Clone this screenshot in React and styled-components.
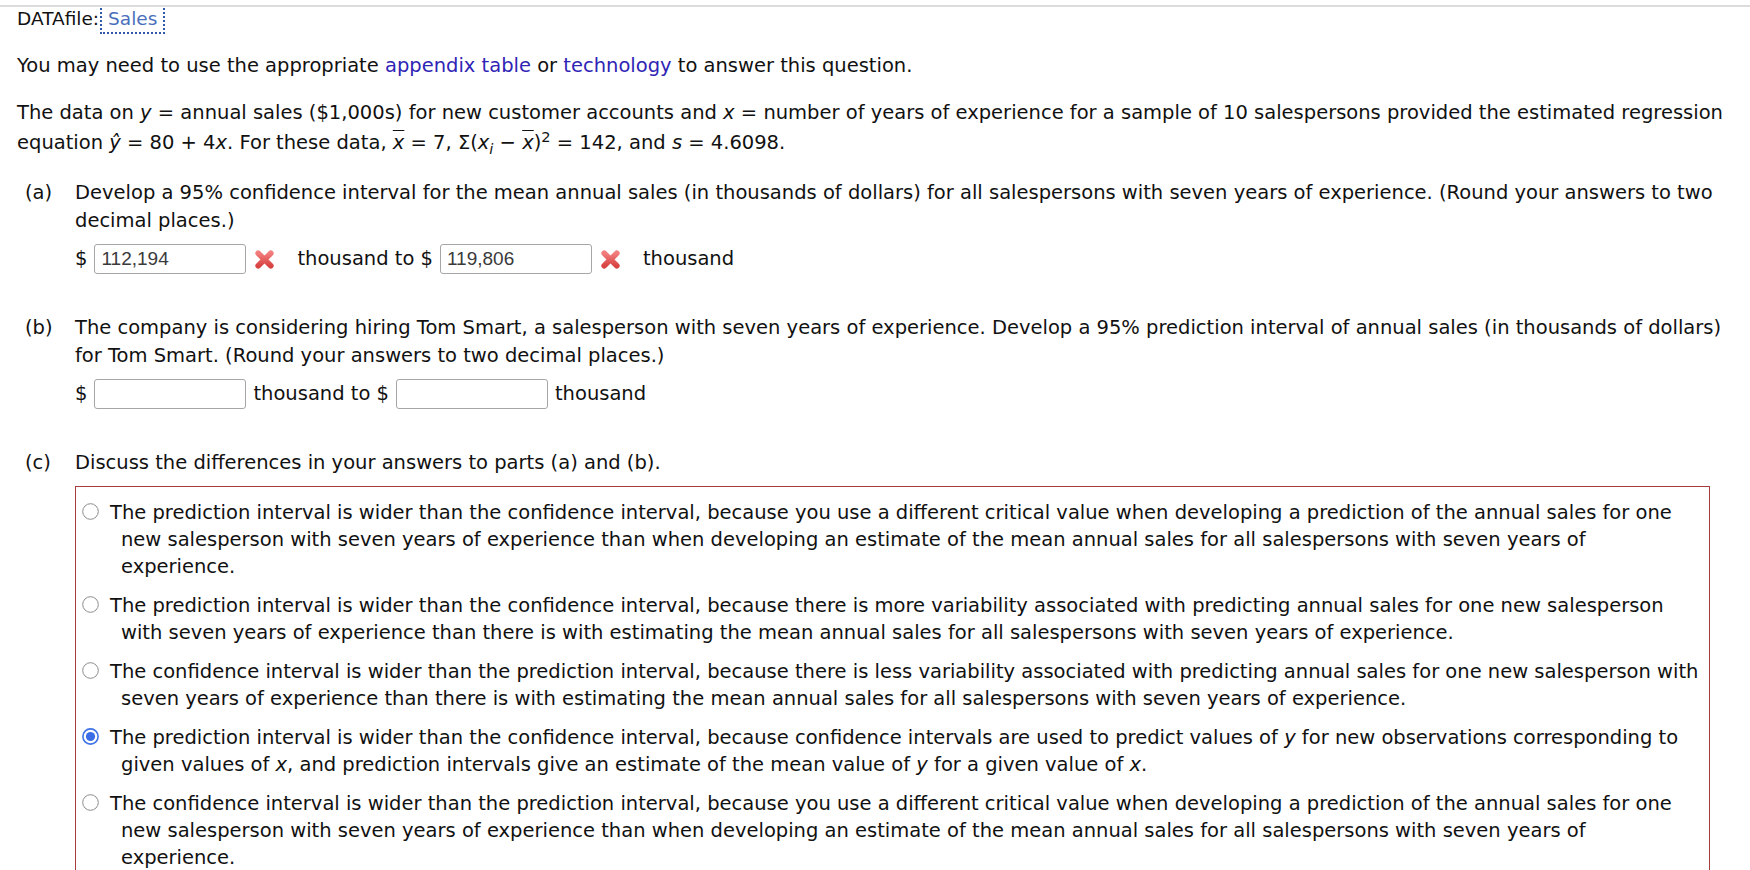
import React from 'react';
import styled, { createGlobalStyle } from 'styled-components';

const GlobalStyle = createGlobalStyle`
  html, body {
    margin: 0;
    padding: 0;
    background: #fff;
  }
  body {
    font-family: 'DejaVu Sans', Verdana, sans-serif;
    font-size: 19.5px;
    color: #111;
  }
`;

const Page = styled.div`
  margin-top: 5px;
  border-top: 2px solid #dcdcdc;
  padding: 1px 17px 0 17px;
`;

const DataLine = styled.div`
  font-size: 18.5px;
  line-height: 22px;
`;

const DataLink = styled.span`
  color: #4a70bb;
  margin-left: 1px;
  padding: 0 6px 3px 6px;
  border: 2px dotted #3158a8;
  border-top: none;
`;

const Intro = styled.p`
  margin: 22px 0 0 0;
  line-height: 27px;
`;

const Link = styled.span`
  color: #2f24b5;
`;

const Problem = styled.p`
  margin: 19px 0 0 0;
  line-height: 30px;
`;

const Var = styled.i`
  font-style: italic;
`;

const Bar = styled.i`
  font-style: italic;
  text-decoration: overline;
`;

const Sup = styled.sup`
  font-size: 0.75em;
  line-height: 0;
`;

const Sub = styled.sub`
  font-size: 0.75em;
  line-height: 0;
  font-style: italic;
`;

const Part = styled.div`
  display: flex;
  padding-left: 8px;
  margin-top: ${(p) => p.$top}px;
  line-height: 27.5px;
`;

const Label = styled.div`
  width: 50px;
  flex: none;
`;

const Body = styled.div`
  flex: 1;
`;

const AnswerRow = styled.div`
  display: flex;
  align-items: center;
  gap: 7px;
  margin-top: 10px;
  height: 30px;
`;

const Field = styled.div`
  box-sizing: border-box;
  width: 152px;
  height: 30px;
  border: 1px solid #a6a6a6;
  border-radius: 3px;
  padding: 0 6px;
  font-family: 'Liberation Sans', Arial, sans-serif;
  font-size: 19px;
  line-height: 28px;
  color: #3a3a3a;
`;

const Mark = styled.span`
  display: inline-flex;
  margin: 0 15px 0 1px;
`;

const Choices = styled.div`
  margin: 9px 23px 0 0;
  border: 1px solid #a63c3c;
  padding: 12px 6px 40px 6px;
`;

const Option = styled.div`
  padding-left: 39px;
  text-indent: -39px;
  line-height: 27px;
  & + & {
    margin-top: 12px;
  }
`;

const RadioBox = styled.span`
  display: inline-block;
  width: 17px;
  height: 17px;
  margin-right: 11px;
  vertical-align: -1px;
  text-indent: 0;
  svg {
    display: block;
  }
`;

const Radio = ({ checked }) => (
  <RadioBox>
    <svg width="17" height="17" viewBox="0 0 17 17">
      {checked ? (
        <>
          <circle cx="8.5" cy="8.5" r="7.6" fill="#fff" stroke="#3f73e6" strokeWidth="1.6" />
          <circle cx="8.5" cy="8.5" r="4.6" fill="#3a6de6" />
        </>
      ) : (
        <circle cx="8.5" cy="8.5" r="7.8" fill="#fff" stroke="#8c8c8c" strokeWidth="1" />
      )}
    </svg>
  </RadioBox>
);

const WrongMark = () => (
  <Mark>
    <svg width="21" height="21" viewBox="0 0 20 20">
      <defs>
        <linearGradient id="xg" x1="0" y1="0" x2="0" y2="1">
          <stop offset="0" stopColor="#f27d7d" />
          <stop offset="1" stopColor="#d84343" />
        </linearGradient>
      </defs>
      <path d="M4 4 L16 16 M16 4 L4 16" stroke="url(#xg)" strokeWidth="5.4" strokeLinecap="round" />
    </svg>
  </Mark>
);

const options = [
  {
    text: 'The prediction interval is wider than the confidence interval, because you use a different critical value when developing a prediction of the annual sales for one new salesperson with seven years of experience than when developing an estimate of the mean annual sales for all salespersons with seven years of experience.',
  },
  {
    text: 'The prediction interval is wider than the confidence interval, because there is more variability associated with predicting annual sales for one new salesperson with seven years of experience than there is with estimating the mean annual sales for all salespersons with seven years of experience.',
  },
  {
    text: 'The confidence interval is wider than the prediction interval, because there is less variability associated with predicting annual sales for one new salesperson with seven years of experience than there is with estimating the mean annual sales for all salespersons with seven years of experience.',
  },
  {
    checked: true,
    text: (
      <>
        The prediction interval is wider than the confidence interval, because confidence intervals are used to predict
        values of <Var>y</Var> for new observations corresponding to given values of <Var>x</Var>, and prediction
        intervals give an estimate of the mean value of <Var>y</Var> for a given value of <Var>x</Var>.
      </>
    ),
  },
  {
    text: 'The confidence interval is wider than the prediction interval, because you use a different critical value when developing a prediction of the annual sales for one new salesperson with seven years of experience than when developing an estimate of the mean annual sales for all salespersons with seven years of experience.',
  },
];

const App = () => {
  return (
    <>
      <GlobalStyle />
      <Page>
        <DataLine>
          DATAfile:<DataLink>Sales</DataLink>
        </DataLine>
        <Intro>
          You may need to use the appropriate <Link>appendix table</Link> or <Link>technology</Link> to answer this
          question.
        </Intro>
        <Problem>
          The data on <Var>y</Var> = annual sales ($1,000s) for new customer accounts and <Var>x</Var> = number of
          years of experience for a sample of 10 salespersons provided the estimated regression equation{' '}
          <Var>ŷ</Var> = 80 + 4<Var>x</Var>. For these data, <Bar>x</Bar> = 7, Σ(<Var>x</Var>
          <Sub>i</Sub> − <Bar>x</Bar>)<Sup>2</Sup> = 142, and <Var>s</Var> = 4.6098.
        </Problem>

        <Part $top={21}>
          <Label>(a)</Label>
          <Body>
            Develop a 95% confidence interval for the mean annual sales (in thousands of dollars) for all salespersons
            with seven years of experience. (Round your answers to two decimal places.)
            <AnswerRow>
              <span>$</span>
              <Field>112,194</Field>
              <WrongMark />
              <span>thousand to $</span>
              <Field>119,806</Field>
              <WrongMark />
              <span>thousand</span>
            </AnswerRow>
          </Body>
        </Part>

        <Part $top={40}>
          <Label>(b)</Label>
          <Body>
            The company is considering hiring Tom Smart, a salesperson with seven years of experience. Develop a 95%
            prediction interval of annual sales (in thousands of dollars) for Tom Smart. (Round your answers to two
            decimal places.)
            <AnswerRow>
              <span>$</span>
              <Field />
              <span>thousand to $</span>
              <Field />
              <span>thousand</span>
            </AnswerRow>
          </Body>
        </Part>

        <Part $top={40}>
          <Label>(c)</Label>
          <Body>
            Discuss the differences in your answers to parts (a) and (b).
            <Choices>
              {options.map((opt, i) => (
                <Option key={i}>
                  <Radio checked={opt.checked} />
                  {opt.text}
                </Option>
              ))}
            </Choices>
          </Body>
        </Part>
      </Page>
    </>
  );
};

export default App;
